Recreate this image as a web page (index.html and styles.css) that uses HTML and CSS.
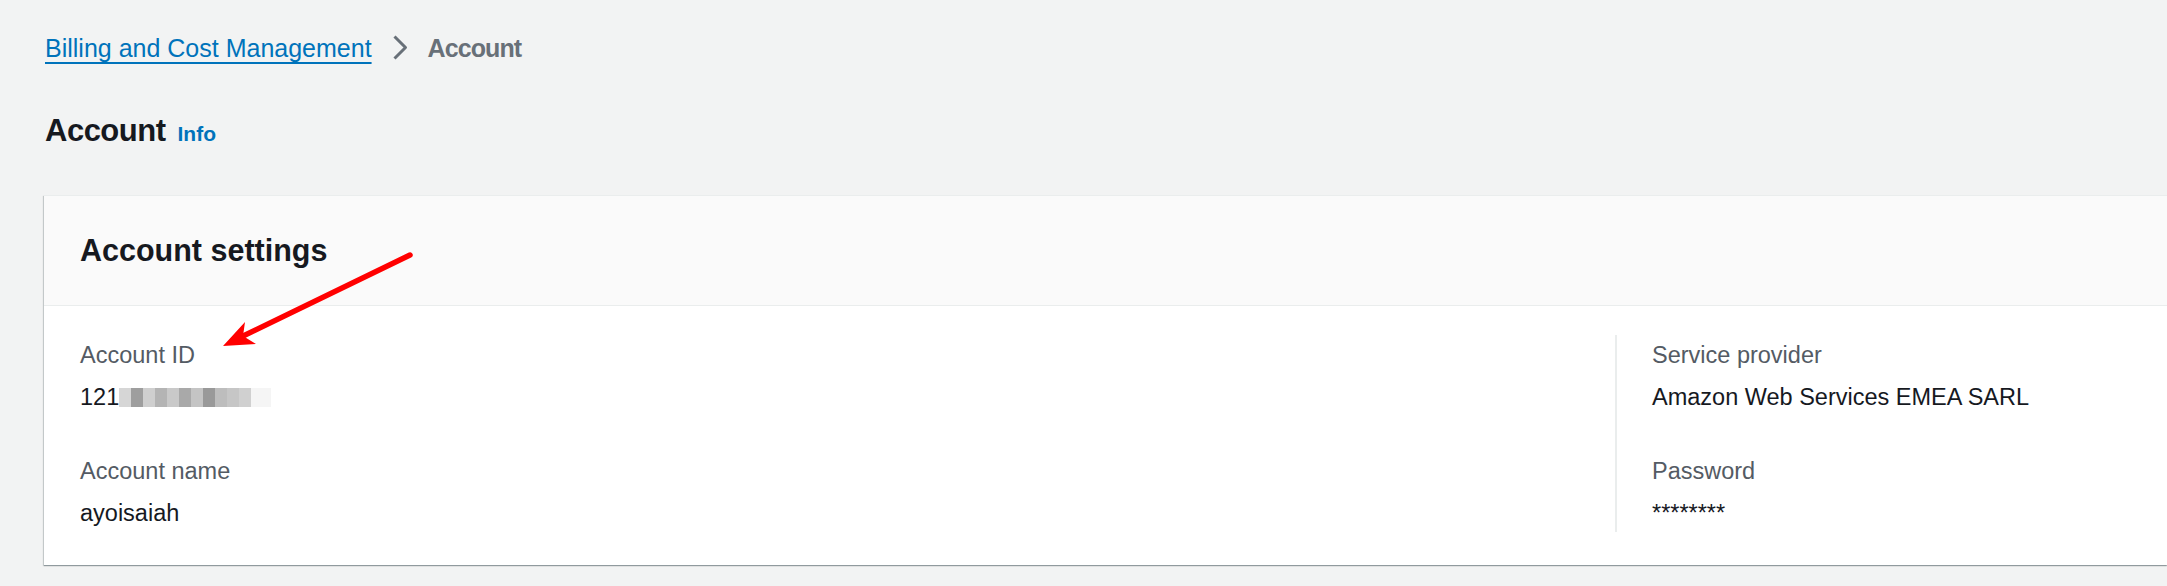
FILE: index.html
```html
<!DOCTYPE html>
<html lang="en">
<head>
    <meta charset="UTF-8">
    <meta name="viewport" content="width=device-width, initial-scale=1.0">
    <title>Account - Billing and Cost Management</title>
    <link rel="stylesheet" href="styles.css">
</head>
<body>
    <nav class="breadcrumbs">
        <a href="#" class="crumb-link">Billing and Cost Management</a>
        <svg class="crumb-sep" width="16" height="27" viewBox="0 0 16 27">
            <polyline points="2.5,2.5 13.5,13.5 2.5,24.5" fill="none" stroke="#687078" stroke-width="3" stroke-linejoin="round"/>
        </svg>
        <span class="crumb-current">Account</span>
    </nav>

    <div class="page-header">
        <h1>Account</h1>
        <a href="#" class="info-link">Info</a>
    </div>

    <div class="card">
        <div class="card-header">
            <h2>Account settings</h2>
        </div>
        <div class="card-body">
            <div class="column">
                <div class="field">
                    <div class="label">Account ID</div>
                    <div class="value">121<span class="redacted"></span></div>
                </div>
                <div class="field">
                    <div class="label">Account name</div>
                    <div class="value">ayoisaiah</div>
                </div>
            </div>
            <div class="column divided">
                <div class="field">
                    <div class="label">Service provider</div>
                    <div class="value">Amazon Web Services EMEA SARL</div>
                </div>
                <div class="field">
                    <div class="label">Password</div>
                    <div class="value">********</div>
                </div>
            </div>
        </div>
    </div>

    <!-- annotation arrow pointing at the account id -->
    <svg class="annotation" width="205" height="110" viewBox="0 0 205 110">
        <line x1="195" y1="10" x2="26" y2="92" stroke="#ff0000" stroke-width="5.5" stroke-linecap="round"/>
        <polygon points="8,101 30,77 28,91 41,99" fill="#ff0000"/>
    </svg>
</body>
</html>
```

FILE: styles.css
```css
html {
    overflow: hidden;
}
body {
    position: relative;
    margin: 0;
    padding: 31px 0 40px 45px;
    background-color: #f2f3f3;
    font-family: "Liberation Sans", Arial, sans-serif;
    color: #16191f;
}
.breadcrumbs {
    display: flex;
    align-items: center;
    gap: 20px;
    font-size: 25px;
    line-height: 35px;
}
.crumb-link {
    color: #0073bb;
    text-decoration: underline;
    text-decoration-thickness: 2px;
    text-underline-offset: 5px;
}
.crumb-sep {
    display: block;
    margin-top: -2px;
}
.crumb-current {
    color: #687078;
    font-weight: bold;
    letter-spacing: -0.9px;
}
.page-header {
    display: flex;
    align-items: baseline;
    gap: 12px;
    margin-top: 45px;
}
.page-header h1 {
    margin: 0;
    font-size: 31px;
    line-height: 40px;
    letter-spacing: -0.5px;
    font-weight: bold;
}
.info-link {
    color: #0073bb;
    font-size: 21px;
    font-weight: bold;
    text-decoration: none;
}
.card {
    margin: 44px 0 0 -1px;
    background-color: #ffffff;
    border-top: 1px solid #eaeded;
    box-shadow: 0 1px 1px 0 rgba(0, 28, 36, 0.3), -1px 1px 1px 0 rgba(0, 28, 36, 0.15);
}
.card-header {
    background-color: #fafafa;
    border-bottom: 1px solid #eaeded;
    padding: 34px 36px 35px;
}
.card-header h2 {
    margin: 0;
    font-size: 30.5px;
    line-height: 40px;
    font-weight: bold;
}
.card-body {
    display: grid;
    grid-template-columns: 1535px 1fr;
    padding: 29px 36px 33px;
}
.column {
    display: flex;
    flex-direction: column;
    gap: 41px;
    padding: 4px 0 2px;
}
.column.divided {
    border-left: 2px solid #eaeded;
    padding-left: 35px;
}
.label {
    color: #545b64;
    font-size: 23.5px;
    line-height: 33px;
}
.value {
    margin-top: 9px;
    font-size: 23.5px;
    line-height: 33px;
}
.redacted {
    display: inline-block;
    width: 152px;
    height: 19px;
    vertical-align: -2px;
    background: linear-gradient(to right,
        #d6d6d6 0 12px, #9e9e9e 12px 24px, #cfcfcf 24px 36px, #b4b4b4 36px 48px,
        #c9c9c9 48px 60px, #a9a9a9 60px 72px, #c4c4c4 72px 84px, #999999 84px 96px,
        #bdbdbd 96px 108px, #c6c6c6 108px 120px, #d0d0d0 120px 132px, #f5f5f5 132px 152px);
}
.annotation {
    position: absolute;
    left: 215px;
    top: 245px;
}
```
